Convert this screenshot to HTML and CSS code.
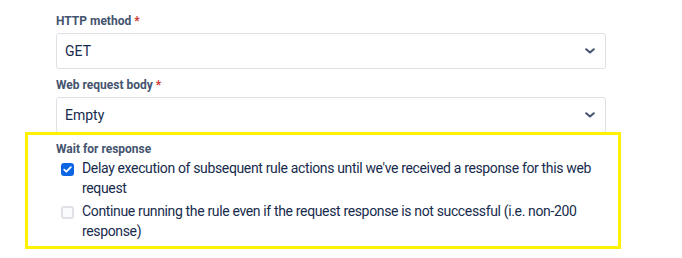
FILE: index.html
```html
<!DOCTYPE html>
<html lang="en">
<head>
  <meta charset="UTF-8">
  <title>Send web request</title>
  <link rel="stylesheet" href="styles.css">
</head>
<body>

<div class="form">
  <div class="field">
    <div class="field-label">HTTP method <span class="required">*</span></div>
    <div class="select">
      <span>GET</span>
      <svg class="chevron" width="10" height="6" viewBox="0 0 10 6"><path d="M1.2 1.2 L5 4.6 L8.8 1.2" fill="none" stroke="#44546f" stroke-width="2" stroke-linecap="round" stroke-linejoin="round"/></svg>
    </div>
  </div>

  <div class="field">
    <div class="field-label">Web request body <span class="required">*</span></div>
    <div class="select">
      <span>Empty</span>
      <svg class="chevron" width="10" height="6" viewBox="0 0 10 6"><path d="M1.2 1.2 L5 4.6 L8.8 1.2" fill="none" stroke="#44546f" stroke-width="2" stroke-linecap="round" stroke-linejoin="round"/></svg>
    </div>
  </div>

  <div class="highlight">
    <div class="field-label">Wait for response</div>
    <label class="option">
      <span class="checkbox checked">
        <svg width="9" height="7" viewBox="0 0 9 7"><path d="M1.2 3.6 L3.4 5.6 L7.8 1.2" fill="none" stroke="#fff" stroke-width="1.8" stroke-linecap="round" stroke-linejoin="round"/></svg>
      </span>
      <span class="option-text">Delay execution of subsequent rule actions until we've received a response for this web request</span>
    </label>
    <label class="option">
      <span class="checkbox"></span>
      <span class="option-text">Continue running the rule even if the request response is not successful (i.e. non-200 response)</span>
    </label>
  </div>
</div>

</body>
</html>
```

FILE: styles.css
```css
body {
  margin: 0;
  background: #fff;
  font-family: Roboto, "Noto Sans", sans-serif;
  color: #172b4d;
}

.form {
  width: 550px;
  padding: 13px 0 0 56px;
}

.field {
  margin-bottom: 8px;
}

.field-label {
  font-size: 12px;
  font-weight: 700;
  line-height: 16px;
  color: #44546f;
  margin-bottom: 4px;
}

.required {
  color: #c9372c;
}

.select {
  height: 36px;
  box-sizing: border-box;
  border: 1px solid #dfe1e6;
  border-radius: 3px;
  padding: 0 10px 0 8px;
  display: flex;
  align-items: center;
  justify-content: space-between;
  font-size: 14px;
}

.chevron {
  display: block;
}

.highlight {
  margin: -9px 0 0 -31px;
  width: 596px;
  box-sizing: border-box;
  border: 3px solid #fff200;
  padding: 6px 0 5px 28px;
  position: relative;
  background: #fff;
}

.highlight .field-label {
  margin-bottom: 1px;
}

.option {
  display: flex;
  align-items: flex-start;
  font-size: 14px;
  line-height: 20px;
  margin-bottom: 3px;
  width: 550px;
}

.option:last-child {
  margin-bottom: 0;
}

.checkbox {
  flex: none;
  width: 13px;
  height: 13px;
  box-sizing: border-box;
  margin: 5px 8px 0 5px;
  border: 2px solid #dfe1e6;
  border-radius: 3px;
  background: #fafbfc;
  display: flex;
  align-items: center;
  justify-content: center;
}

.checkbox.checked {
  background: #0c66e4;
  border-color: #0c66e4;
}

.checkbox svg {
  display: block;
}

.option-text {
  flex: 1;
  letter-spacing: -0.35px;
}
```
